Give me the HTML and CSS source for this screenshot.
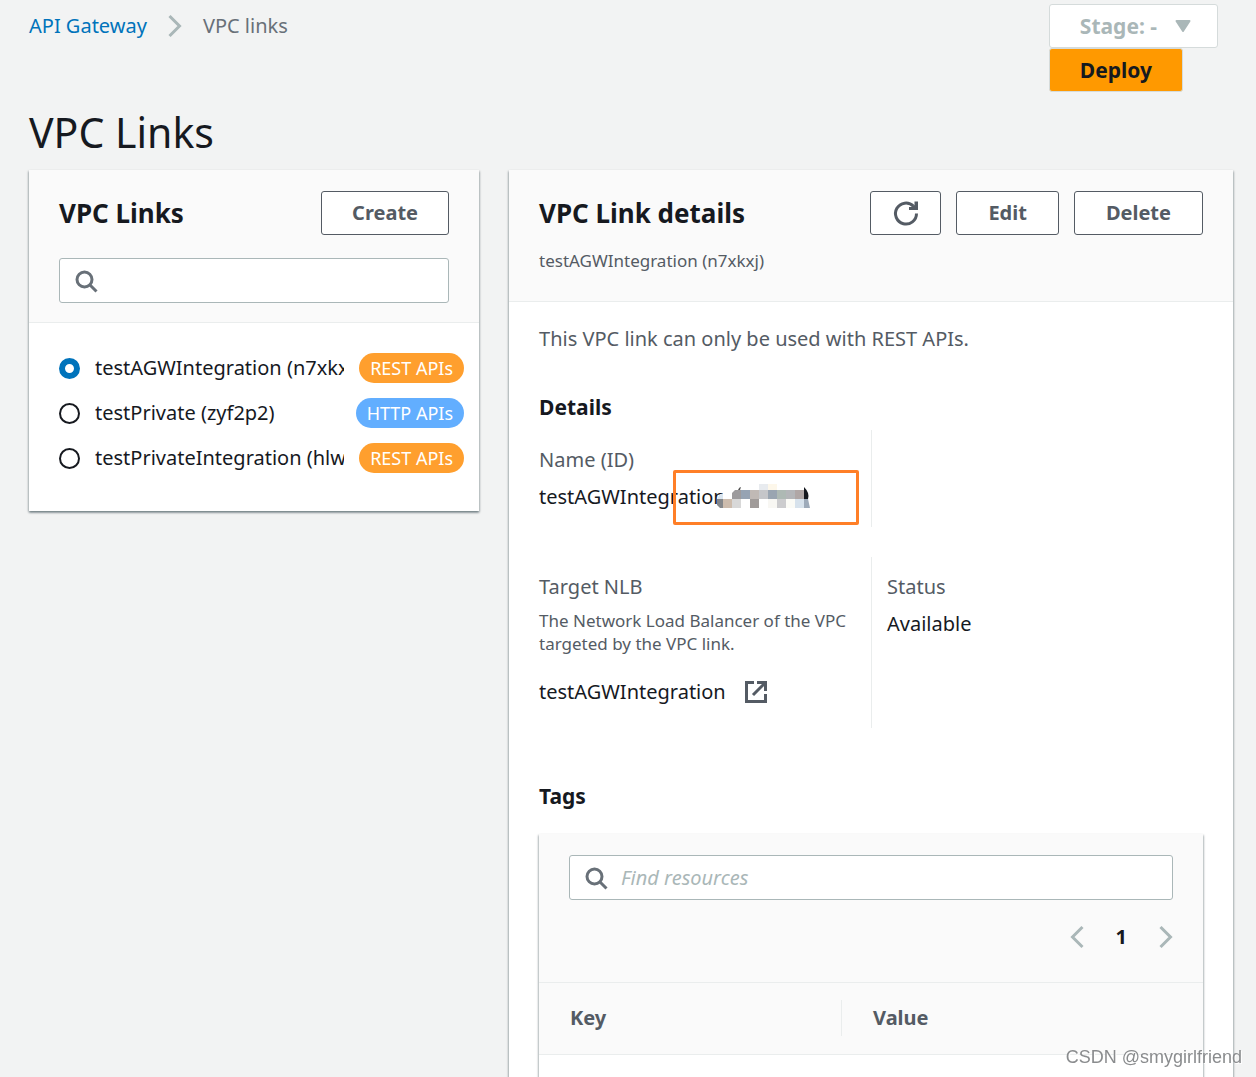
FILE: index.html
```html
<!DOCTYPE html>
<html lang="en">
<head>
<meta charset="utf-8">
<title>VPC links - API Gateway</title>
<link rel="stylesheet" href="styles.css">
</head>
<body>
<header class="topbar">
  <nav class="breadcrumb" aria-label="Breadcrumb">
    <a href="#">API Gateway</a>
    <svg class="chevron" width="14" height="24" viewBox="0 0 14 24" aria-hidden="true"><path d="M1.500 2 L11.500 12 L1.500 22"/></svg>
    <span>VPC links</span>
  </nav>
  <div class="stage-actions">
    <button class="btn btn-stage" type="button" disabled>Stage: -
      <svg width="16" height="14" viewBox="0 0 16 14" aria-hidden="true"><path d="M1.500 2 H14.500 L8 12 Z" fill="#aab7b8" stroke="#aab7b8" stroke-width="2" stroke-linejoin="round"/></svg>
    </button>
    <button class="btn btn-deploy" type="button">Deploy</button>
  </div>
</header>
<main>
  <h1>VPC Links</h1>
  <div class="columns">
    <section class="panel">
      <div class="panel-head">
        <div class="head-row">
          <h2>VPC Links</h2>
          <button class="btn" type="button">Create</button>
        </div>
        <label class="search search-links">
          <svg width="24" height="24" viewBox="0 0 24 24" aria-hidden="true"><circle cx="9.500" cy="10.500" r="7.500"/><path d="M14.500 15.500 L21.500 22.500"/></svg>
          <input type="text" aria-label="Search VPC links">
        </label>
      </div>
      <div class="link-list">
        <label class="link-row"><input type="radio" name="vpc" checked><span class="link-name">testAGWIntegration (n7xkxj)</span><span class="badge">REST APIs</span></label>
        <label class="link-row"><input type="radio" name="vpc"><span class="link-name">testPrivate (zyf2p2)</span><span class="badge badge-http">HTTP APIs</span></label>
        <label class="link-row"><input type="radio" name="vpc"><span class="link-name">testPrivateIntegration (hlw</span><span class="badge">REST APIs</span></label>
      </div>
    </section>

    <section class="panel">
      <div class="panel-head">
        <div class="head-row">
          <h2>VPC Link details</h2>
          <div class="actions">
            <button class="btn btn-icon" type="button" aria-label="Refresh">
              <svg width="27" height="27" viewBox="0 0 27 27" aria-hidden="true"><path d="M24.500 13.500 A10.500 10.500 0 1 1 21.400 6.100" fill="none" stroke="#545b64" stroke-width="3"/><path d="M22.500 1.500 H26 V10 H17 V7 H19.500 L22.500 5 Z" fill="#545b64"/></svg>
            </button>
            <button class="btn" type="button">Edit</button>
            <button class="btn" type="button">Delete</button>
          </div>
        </div>
        <p class="subtitle">testAGWIntegration (n7xkxj)</p>
      </div>
      <div class="panel-body">
        <p class="note">This VPC link can only be used with REST APIs.</p>
        <h3>Details</h3>
        <dl class="details">
          <div class="cell">
            <dt>Name (ID)</dt>
            <dd class="masked">testAGWIntegration
              <svg class="mosaic" width="93" height="24" viewBox="0 0 93 24" aria-hidden="true">
                <path d="M6 0H87V24H6Z" fill="#fff"/>
                <path d="M21 6 Q22 3 24 3 L23 6Z" fill="#555"/>
                <path d="M87 3 Q93 9 91 15 H87Z" fill="#16191f"/>
                <path d="M3 10H6V15H0Z" fill="#dbe6f0"/>
                <path d="M42 0H51V6H42Z" fill="#e8ebef"/>
                <path d="M51 0H60V6H51Z" fill="#fdf7ea"/>
                <path d="M15 9L18 6H24V15H15Z" fill="#9d9b9d"/>
                <path d="M24 6H33V15H24Z" fill="#96a3b3"/>
                <path d="M33 6H42V15H33Z" fill="#c0b9b5"/>
                <path d="M42 6H51V15H42Z" fill="#c5c6c9"/>
                <path d="M51 6H60V15H51Z" fill="#9aa5b1"/>
                <path d="M60 6H69V15H60Z" fill="#aeb9b4"/>
                <path d="M69 6H78V15H69Z" fill="#b4b6b9"/>
                <path d="M78 6H87V15H78Z" fill="#b0a7a6"/>
                <path d="M0 15H6V24H3L0 21Z" fill="#85878a"/>
                <path d="M6 15H15V24H6Z" fill="#cdbcad"/>
                <path d="M15 15H24V24H15Z" fill="#d8d8d8"/>
                <path d="M33 15H42V24H33Z" fill="#a09b99"/>
                <path d="M51 15H60V24H51Z" fill="#f8f7f3"/>
                <path d="M60 15H69V24H60Z" fill="#ccccce"/>
                <path d="M69 15H78V24H69Z" fill="#fbfbf6"/>
                <path d="M78 15H87V24H78Z" fill="#d7e2ec"/>
                <path d="M87 15H91L93 24H87Z" fill="#9eabba"/>
              </svg>
              <span class="highlight"></span>
            </dd>
          </div>
          <div class="cell"></div>
          <div class="cell">
            <dt>Target NLB</dt>
            <dd class="hint">The Network Load Balancer of the VPC targeted by the VPC link.</dd>
            <dd class="target">testAGWIntegration
              <a href="#" aria-label="Open load balancer"><svg width="24" height="24" viewBox="0 0 24 24" aria-hidden="true"><path d="M10 2.500 H2.500 V21.500 H21.500 V14"/><path d="M13 2.500 H21.500 V11 M21 3 L9 15"/></svg></a>
            </dd>
          </div>
          <div class="cell">
            <dt>Status</dt>
            <dd>Available</dd>
          </div>
        </dl>
        <h3>Tags</h3>
        <div class="panel tags">
          <div class="panel-head tags-head">
            <label class="search">
              <svg width="24" height="24" viewBox="0 0 24 24" aria-hidden="true"><circle cx="9.500" cy="10.500" r="7.500"/><path d="M14.500 15.500 L21.500 22.500"/></svg>
              <input type="text" placeholder="Find resources" aria-label="Find resources">
            </label>
            <div class="pager">
              <button type="button" aria-label="Previous page" disabled><svg class="chevron" width="14" height="24" viewBox="0 0 14 24" aria-hidden="true"><path d="M12.500 2 L2.500 12 L12.500 22"/></svg></button>
              <button type="button">1</button>
              <button type="button" aria-label="Next page" disabled><svg class="chevron" width="14" height="24" viewBox="0 0 14 24" aria-hidden="true"><path d="M1.500 2 L11.500 12 L1.500 22"/></svg></button>
            </div>
          </div>
          <table>
            <thead><tr><th scope="col"><span>Key</span></th><th scope="col"><span>Value</span></th></tr></thead>
            <tbody><tr><td></td><td></td></tr></tbody>
          </table>
        </div>
      </div>
    </section>
  </div>
</main>
<div class="watermark">CSDN @smygirlfriend</div>
</body>
</html>
```
FILE: styles.css
```css
* { box-sizing: border-box; }
html { height: 100%; overflow: hidden; }
body {
  margin: 0;
  padding: 4px 23px 0 29px;
  height: 100%;
  overflow: hidden;
  background: #f2f3f3;
  color: #16191f;
  font: 20px/30px "Noto Sans", "Open Sans", sans-serif;
}
h1, h2, h3, p, dl, dd { margin: 0; }
a { color: #0073bb; text-decoration: none; }
button, input { font: inherit; color: inherit; }

.topbar { display: flex; justify-content: space-between; align-items: flex-start; }
.breadcrumb { display: flex; align-items: center; gap: 21px; height: 44px; color: #687078; }
.chevron { display: block; fill: none; stroke: #aab7b8; stroke-width: 3; }
.stage-actions { display: flex; flex-direction: column; align-items: flex-start; margin-right: 15px; }

.btn {
  display: flex;
  align-items: center;
  justify-content: center;
  height: 44px;
  padding: 0 30px;
  border: 1px solid #545b64;
  border-radius: 3px;
  background: #fff;
  color: #545b64;
  font-weight: 700;
  white-space: nowrap;
}
.stage-actions .btn { font-size: 21px; }
.btn-stage { gap: 18px; padding-right: 26px; border-color: #d5dbdb; color: #aab7b8; }
.btn-deploy { border-color: #d5dbdb; background: #f90; color: #16191f; }
.actions .btn { padding: 0 31px; }
.actions .btn-icon { padding: 0 21px; }

h1 { padding: 10px 0 8px; font-size: 41px; font-weight: 400; line-height: 60px; }
h2 { font-size: 26px; font-weight: 700; line-height: 44px; }
h3 { font-size: 21px; font-weight: 700; line-height: 30px; }

.columns { display: grid; grid-template-columns: 23fr 37fr; gap: 30px; align-items: start; }
.panel {
  min-width: 0;
  background: #fff;
  box-shadow: 0 2px 2px rgba(0, 28, 36, .3), 1px 1px 2px rgba(0, 28, 36, .2), -1px 1px 2px rgba(0, 28, 36, .2);
}
.panel-head { padding: 21px 30px 19px; border-bottom: 1px solid #eaeded; background: #fafafa; }
.head-row { display: flex; justify-content: space-between; }
.actions { display: flex; gap: 15px; }

.search {
  display: flex;
  align-items: center;
  gap: 12px;
  height: 45px;
  padding: 0 15px;
  border: 1px solid #aab7b8;
  border-radius: 3px;
  background: #fff;
}
.search svg { flex: none; fill: none; stroke: #687078; stroke-width: 3; }
.search input { flex: 1; min-width: 0; padding: 0; border: 0; outline: 0; background: none; }
.search input::placeholder { color: #aab7b8; font-style: italic; opacity: 1; }
.search-links { margin-top: 23px; }

.link-list { display: flex; flex-direction: column; gap: 15px; padding: 30px 15px 38px 30px; }
.link-row { display: flex; align-items: center; height: 30px; }
.link-row input {
  appearance: none;
  flex: none;
  width: 21px;
  height: 21px;
  margin: 0 15px 0 0;
  border: 2px solid #16191f;
  border-radius: 50%;
  background: #fff;
}
.link-row input:checked { border: 6px solid #0073bb; }
.link-name { flex: 1; min-width: 0; overflow: hidden; white-space: nowrap; }
.badge {
  flex: none;
  margin-left: 15px;
  padding: 0 11px;
  border-radius: 15px;
  background: #ff9f2e;
  color: #fff;
  font-size: 18px;
}
.badge-http { margin-left: 12px; background: #62aeff; }

.subtitle { padding: 14px 0 10px; color: #545b64; font-size: 17px; line-height: 23px; }
.panel-body { padding: 22px 30px 0; }
.note { color: #545b64; }
.note + h3 { margin-top: 38px; }
.details { display: grid; grid-template-columns: 1fr 1fr; row-gap: 30px; margin-top: 8px; }
.cell { padding: 15px 15px 15px 0; }
.cell:nth-child(even) { padding-left: 15px; border-left: 1px solid #eaeded; }
.details dt { color: #545b64; }
.details dd { padding-top: 7px; }
.details .hint { padding-top: 7px; color: #545b64; font-size: 17px; line-height: 23px; }
.details .target { display: flex; align-items: center; gap: 18px; padding: 22px 0 6px; }
.target svg { display: block; fill: none; stroke: #545b64; stroke-width: 3; }
.masked { position: relative; }
.mosaic { position: absolute; left: 178px; top: 9px; }
.highlight { position: absolute; left: 134px; top: -5px; width: 186px; height: 55px; border: 3px solid #ff7f27; border-radius: 2px; }
.details + h3 { margin-top: 53px; }

.tags { margin-top: 23px; }
.tags-head { padding-bottom: 30px; }
.pager { display: flex; justify-content: flex-end; align-items: center; gap: 32px; padding-top: 22px; }
.pager button { padding: 0; border: 0; background: none; font-weight: 700; }
table { width: 100%; border-collapse: collapse; table-layout: fixed; }
th { padding: 17px 0 18px; border-bottom: 1px solid #eaeded; background: #fafafa; color: #545b64; text-align: left; }
th span { display: block; padding: 3px 31px; }
th:first-child { width: 303px; }
th:first-child span { border-right: 1px solid #eaeded; }
td { height: 60px; }

.watermark {
  position: fixed;
  right: 14px;
  bottom: 5px;
  color: #8a8c8e;
  font: 18px/30px "Liberation Sans", sans-serif;
  text-shadow: 1px 1px 0 #fff;
}
```
